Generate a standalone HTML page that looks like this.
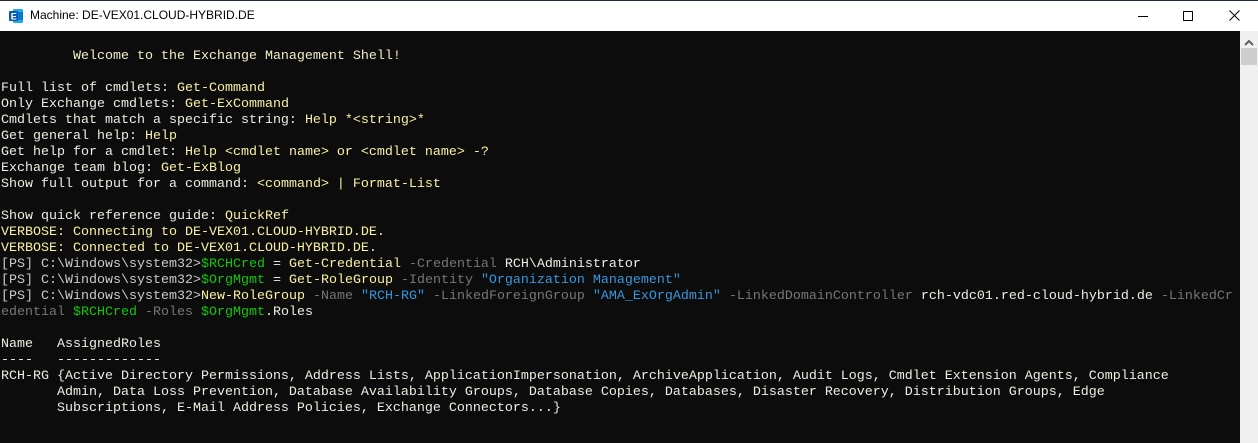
<!DOCTYPE html>
<html><head><meta charset="utf-8"><style>
body{margin:0;width:1258px;height:443px;overflow:hidden;background:#0c0c0c;font-family:"Liberation Sans",sans-serif}
#tb{position:absolute;left:0;top:0;width:1258px;height:31px;background:#fff;border-top:1px solid #1e2a38;box-sizing:border-box}
#tb .t{position:absolute;left:30px;top:7px;font-size:12px;color:#000}
#con{position:absolute;left:0;top:31px;width:1240px;height:412px;background:#0c0c0c}
pre{margin:0;padding:18px 0 0 1px;font-family:"Liberation Mono",monospace;font-size:13.33px;line-height:16px;color:#eeeee2;white-space:pre}
.y{color:#f9f1a5}.g{color:#767676}.b{color:#3a96dd}.v{color:#16c60c}.p{color:#cccccc}.w{color:#f3efc8}
#sb{position:absolute;left:1240px;top:31px;width:18px;height:412px;background:#f0f0f0}
</style></head><body>
<div id="tb">
<svg style="position:absolute;left:8px;top:7px" width="16" height="16" viewBox="0 0 16 16"><rect x="5" y="1" width="10" height="14" rx="1" fill="#28a8ea"/><rect x="9" y="4" width="6" height="8" fill="#0078d4"/><rect x="1" y="3" width="9" height="10" rx="1" fill="#0a5ca8"/><text x="2.8" y="11.5" font-size="9" font-family="Liberation Sans" font-weight="bold" fill="#fff">E</text></svg>
<div class="t">Machine: DE-VEX01.CLOUD-HYBRID.DE</div>
<div style="position:absolute;left:1138px;top:15px;width:10px;height:1px;background:#000"></div>
<div style="position:absolute;left:1183px;top:10px;width:8px;height:8px;border:1px solid #000"></div>
<svg style="position:absolute;left:1229px;top:9px" width="11" height="11"><path d="M0.5 0.5L10.5 10.5M10.5 0.5L0.5 10.5" stroke="#000" stroke-width="1"/></svg>
</div>
<div id="con"><pre><span class="w">         Welcome to the Exchange Management Shell!</span>

Full list of cmdlets: <span class="y">Get-Command</span>
Only Exchange cmdlets: <span class="y">Get-ExCommand</span>
Cmdlets that match a specific string: <span class="y">Help *&lt;string&gt;*</span>
Get general help: <span class="y">Help</span>
Get help for a cmdlet: <span class="y">Help &lt;cmdlet name&gt; or &lt;cmdlet name&gt; -?</span>
Exchange team blog: <span class="y">Get-ExBlog</span>
Show full output for a command: <span class="y">&lt;command&gt; | Format-List</span>

Show quick reference guide: <span class="y">QuickRef</span>
<span class="y">VERBOSE: Connecting to DE-VEX01.CLOUD-HYBRID.DE.</span>
<span class="y">VERBOSE: Connected to DE-VEX01.CLOUD-HYBRID.DE.</span>
<span class="p">[PS] C:\Windows\system32&gt;</span><span class="v">$RCHCred</span> = <span class="y">Get-Credential</span> <span class="g">-Credential</span> RCH\Administrator
<span class="p">[PS] C:\Windows\system32&gt;</span><span class="v">$OrgMgmt</span> = <span class="y">Get-RoleGroup</span> <span class="g">-Identity</span> <span class="b">"Organization Management"</span>
<span class="p">[PS] C:\Windows\system32&gt;</span><span class="y">New-RoleGroup</span> <span class="g">-Name</span> <span class="b">"RCH-RG"</span> <span class="g">-LinkedForeignGroup</span> <span class="b">"AMA_ExOrgAdmin"</span> <span class="g">-LinkedDomainController</span> rch-vdc01.red-cloud-hybrid.de <span class="g">-LinkedCr</span>
<span class="g">edential</span> <span class="v">$RCHCred</span> <span class="g">-Roles</span> <span class="v">$OrgMgmt</span>.Roles

Name   AssignedRoles
----   -------------
RCH-RG {Active Directory Permissions, Address Lists, ApplicationImpersonation, ArchiveApplication, Audit Logs, Cmdlet Extension Agents, Compliance
       Admin, Data Loss Prevention, Database Availability Groups, Database Copies, Databases, Disaster Recovery, Distribution Groups, Edge
       Subscriptions, E-Mail Address Policies, Exchange Connectors...}
</pre></div>
<div id="sb">
<svg style="position:absolute;left:4px;top:9px" width="10" height="6"><path d="M1 5L5 1L9 5" stroke="#606060" stroke-width="2" fill="none"/></svg>
<div style="position:absolute;left:1px;top:17px;width:16px;height:17px;background:#cdcdcd"></div>
</div>
</body></html>
